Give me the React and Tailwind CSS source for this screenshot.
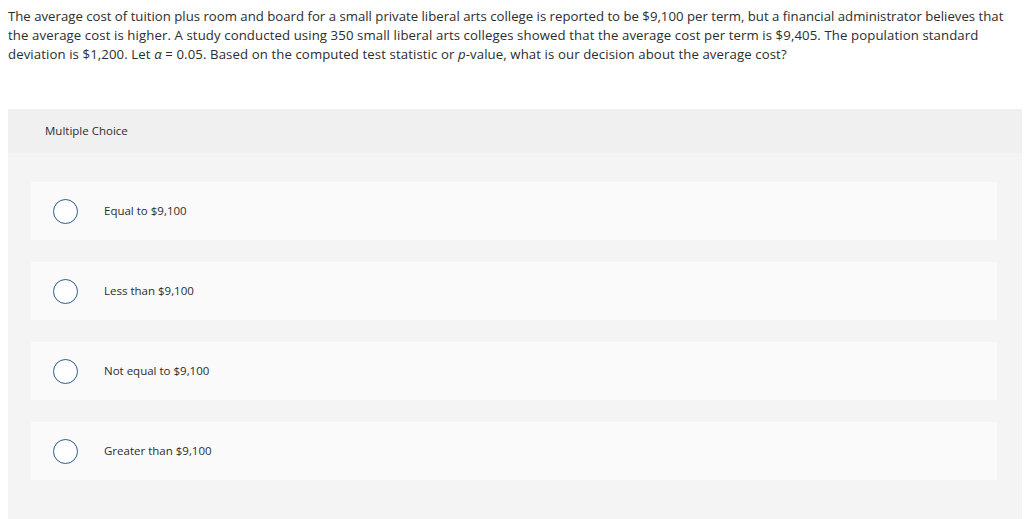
export default function App() {
  const options = ["Equal to $9,100", "Less than $9,100", "Not equal to $9,100", "Greater than $9,100"];
  return (
    <div className="w-[1024px] h-[519px] overflow-hidden bg-white text-[#2d2d2d]" style={{ fontFamily: "'Open Sans', Lato, sans-serif" }}>
      <div className="px-2 pt-[7px] text-[13.2px] leading-[19px] whitespace-nowrap">
        The average cost of tuition plus room and board for a small private liberal arts college is reported to be $9,100 per term, but a financial administrator believes that<br />
        <span className="tracking-[0.1px]">the average cost is higher. A study conducted using 350 small liberal arts colleges showed that the average cost per term is $9,405. The population standard</span><br />
        <span className="tracking-[0.1px]">deviation is $1,200. Let <i>α</i> = 0.05. Based on the computed test statistic or <i>p</i>-value, what is our decision about the average cost?</span>
      </div>
      <div className="mt-[45px] mx-2 w-[1014px] bg-[#f4f4f4] h-[420px]">
        <div className="h-[44px] bg-[#f0f0f0] flex items-center pl-[37px] text-[11.5px]">Multiple Choice</div>
        <div className="flex flex-col gap-[22px] pt-[29px] pl-[23px] pr-[25px]">
          {options.map((o) => (
            <div key={o} className="h-[58px] bg-[#fafafa] flex items-center">
              <div className="ml-[22px] w-[25px] h-[25px] rounded-full border border-[#2b5a86] bg-white" />
              <div className="ml-[26px] text-[11.5px]">{o}</div>
            </div>
          ))}
        </div>
      </div>
    </div>
  );
}
